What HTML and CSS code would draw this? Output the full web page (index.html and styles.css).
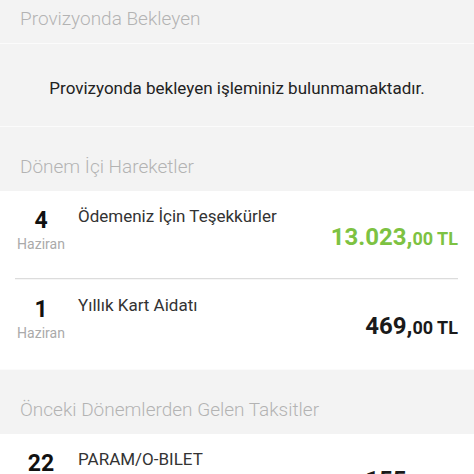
FILE: index.html
```html
<!DOCTYPE html>
<html lang="tr">
<head>
<meta charset="utf-8">
<link rel="stylesheet" href="styles.css">
</head>
<body>
<div class="page">
  <div class="band band-first">Provizyonda Bekleyen</div>
  <div class="empty">Provizyonda bekleyen işleminiz bulunmamaktadır.</div>
  <div class="band">Dönem İçi Hareketler</div>
  <div class="list">
    <div class="row">
      <div class="date"><div class="day">4</div><div class="month">Haziran</div></div>
      <div class="info">
        <div class="title">Ödemeniz İçin Teşekkürler</div>
        <div class="amount green"><span class="big">13.023,</span><span class="small">00 TL</span></div>
      </div>
    </div>
    <div class="divider"></div>
    <div class="row row-last">
      <div class="date"><div class="day">1</div><div class="month">Haziran</div></div>
      <div class="info">
        <div class="title">Yıllık Kart Aidatı</div>
        <div class="amount"><span class="big">469,</span><span class="small">00 TL</span></div>
      </div>
    </div>
  </div>
  <div class="band">Önceki Dönemlerden Gelen Taksitler</div>
  <div class="list">
    <div class="row">
      <div class="date"><div class="day">22</div><div class="month">Haziran</div></div>
      <div class="info">
        <div class="title">PARAM/O-BILET</div>
        <div class="amount"><span class="big">155,</span><span class="small">00 TL</span></div>
      </div>
    </div>
  </div>
</div>
</body>
</html>
```
FILE: styles.css
```css
html, body {
  margin: 0;
  padding: 0;
  background: #ffffff;
}
body {
  font-family: Roboto, "Liberation Sans", sans-serif;
  width: 474px;
  height: 474px;
  overflow: hidden;
}
.page {
  display: flex;
  flex-direction: column;
}
.band {
  background: #f3f3f3;
  color: #b3b3b3;
  font-weight: 300;
  font-size: 19px;
  line-height: 22px;
  padding: 29px 20px 13px;
  border-top: 1px solid #fbfbfb;
}
.band-first {
  padding-top: 8px;
  padding-bottom: 13px;
  border-top: none;
}
.empty {
  background: #f3f3f3;
  border-top: 1px solid #fbfbfb;
  color: #222;
  font-size: 17px;
  line-height: 20px;
  text-align: center;
  padding: 34px 0 28px;
}
.list {
  background: #fff;
}
.row {
  display: flex;
  padding: 15px 16px 0 12px;
  height: 72px;
}
.row-last {
  height: 74px;
}
.date {
  width: 58px;
  text-align: center;
  flex: none;
}
.day {
  font-weight: 700;
  font-size: 23px;
  line-height: 26px;
  color: #111;
  margin-top: 2px;
}
.month {
  font-size: 14px;
  line-height: 18px;
  color: #aaa;
  margin-top: 1px;
}
.info {
  flex: 1;
  padding-left: 8px;
  display: flex;
  flex-direction: column;
}
.title {
  font-size: 17px;
  line-height: 20px;
  color: #333;
}
.amount {
  text-align: right;
  font-weight: 700;
  color: #1a1a1a;
  margin-top: -2px;
  line-height: 26px;
}
.amount.green {
  color: #7dc242;
}
.big {
  font-size: 24px;
}
.small {
  font-size: 18px;
}
.divider {
  height: 1px;
  background: #dcdcdc;
  margin: 0 16px 0 15px;
  border-bottom: 1px solid #f6f6f6;
}
```
